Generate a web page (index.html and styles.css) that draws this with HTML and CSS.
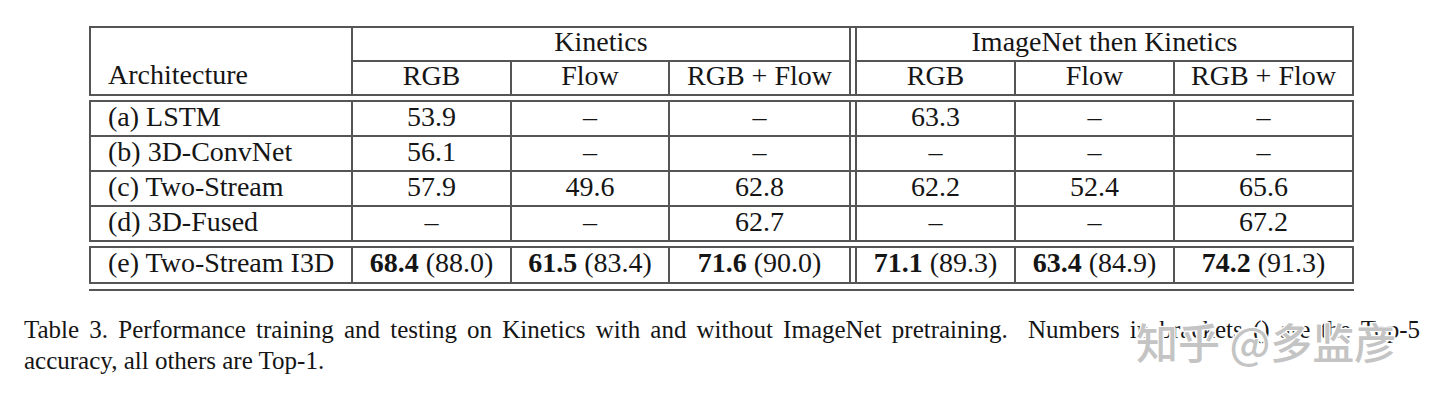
FILE: index.html
```
<html>
<head>
	<meta charset="utf-8">
	<link rel="stylesheet" href="styles.css">
</head>
<body>
<div class="page">
	<div class="results">
		<div class="block head">
			<div class="cell name arch">Architecture</div>
			<div class="cell kinetics">Kinetics</div>
			<div class="cell gap gap_head"></div>
			<div class="cell imagenet">ImageNet then Kinetics</div>
			<div class="cell">RGB</div>
			<div class="cell">Flow</div>
			<div class="cell">RGB + Flow</div>
			<div class="cell">RGB</div>
			<div class="cell">Flow</div>
			<div class="cell">RGB + Flow</div>
		</div>

		<div class="block rows">
			<div class="cell name">(a) LSTM</div>
			<div class="cell">53.9</div>
			<div class="cell">–</div>
			<div class="cell">–</div>
			<div class="cell gap"></div>
			<div class="cell">63.3</div>
			<div class="cell">–</div>
			<div class="cell">–</div>

			<div class="cell name">(b) 3D-ConvNet</div>
			<div class="cell">56.1</div>
			<div class="cell">–</div>
			<div class="cell">–</div>
			<div class="cell gap"></div>
			<div class="cell">–</div>
			<div class="cell">–</div>
			<div class="cell">–</div>

			<div class="cell name">(c) Two-Stream</div>
			<div class="cell">57.9</div>
			<div class="cell">49.6</div>
			<div class="cell">62.8</div>
			<div class="cell gap"></div>
			<div class="cell">62.2</div>
			<div class="cell">52.4</div>
			<div class="cell">65.6</div>

			<div class="cell name">(d) 3D-Fused</div>
			<div class="cell">–</div>
			<div class="cell">–</div>
			<div class="cell">62.7</div>
			<div class="cell gap"></div>
			<div class="cell">–</div>
			<div class="cell">–</div>
			<div class="cell">67.2</div>
		</div>

		<div class="block final">
			<div class="cell name">(e) Two-Stream I3D</div>
			<div class="cell"><b>68.4</b>&nbsp;(88.0)</div>
			<div class="cell"><b>61.5</b>&nbsp;(83.4)</div>
			<div class="cell"><b>71.6</b>&nbsp;(90.0)</div>
			<div class="cell gap"></div>
			<div class="cell"><b>71.1</b>&nbsp;(89.3)</div>
			<div class="cell"><b>63.4</b>&nbsp;(84.9)</div>
			<div class="cell"><b>74.2</b>&nbsp;(91.3)</div>
		</div>

		<div class="rule"></div>
	</div>

	<p class="caption">
		Table 3. Performance training and testing on Kinetics with and without ImageNet pretraining.&nbsp; Numbers in brackets () are the Top-5 accuracy, all others are Top-1.
		<span class="watermark">知乎 @多监彦</span>
	</p>
</div>
</body>
</html>
```

FILE: styles.css
```
body {
	margin: 0;
	padding: 0;
	background: white;
	color: #151515;
	font-family: "Liberation Serif", serif;
}

.page {
	padding-top: 26px;
}

.results {
	margin-left: 89px;
	width: 1265px;
}

.block {
	display: grid;
	grid-template-columns: 262px 159px 158px 181px 6px 159px 159px 179px;
	border-left: 2px solid #555;
	border-top: 2px solid #555;
}

.block + .block {
	margin-top: 4px;
}

.head {
	grid-template-rows: 34px 34px;
}

.rows {
	grid-auto-rows: 35px;
}

.final {
	grid-auto-rows: 36px;
}

.cell {
	box-sizing: border-box;
	display: flex;
	align-items: center;
	justify-content: center;
	border-right: 2px solid #555;
	border-bottom: 2px solid #555;
	padding-bottom: 4px;
	font-size: 28px;
	line-height: 32px;
	white-space: nowrap;
}

.cell b {
	font-weight: 700;
}

.name {
	justify-content: flex-start;
	padding-left: 17px;
}

.arch {
	grid-column: 1;
	grid-row: 1 / span 2;
	align-items: flex-end;
	padding-bottom: 3px;
}

.kinetics {
	grid-column: 2 / span 3;
}

.imagenet {
	grid-column: 6 / span 3;
}

.gap_head {
	grid-column: 5;
	grid-row: 1 / span 2;
}

.rule {
	height: 2px;
	margin-top: 5px;
	background: #555;
}

.caption {
	position: relative;
	margin: 23px 0 0 24px;
	width: 1396px;
	font-size: 25px;
	line-height: 31px;
	text-align: justify;
}

/* zhihu watermark, sits over the end of the first caption line */
.watermark {
	position: absolute;
	left: 1112px;
	top: 6px;
	font-family: "Noto Sans CJK SC", sans-serif;
	font-size: 42px;
	line-height: 42px;
	font-weight: 500;
	color: #c4c4c4;
	white-space: nowrap;
	text-shadow: 1px 1px 0 #fff, -1px -1px 0 #fff, 1px -1px 0 #fff, -1px 1px 0 #fff, 0 0 3px #fff;
}
```
